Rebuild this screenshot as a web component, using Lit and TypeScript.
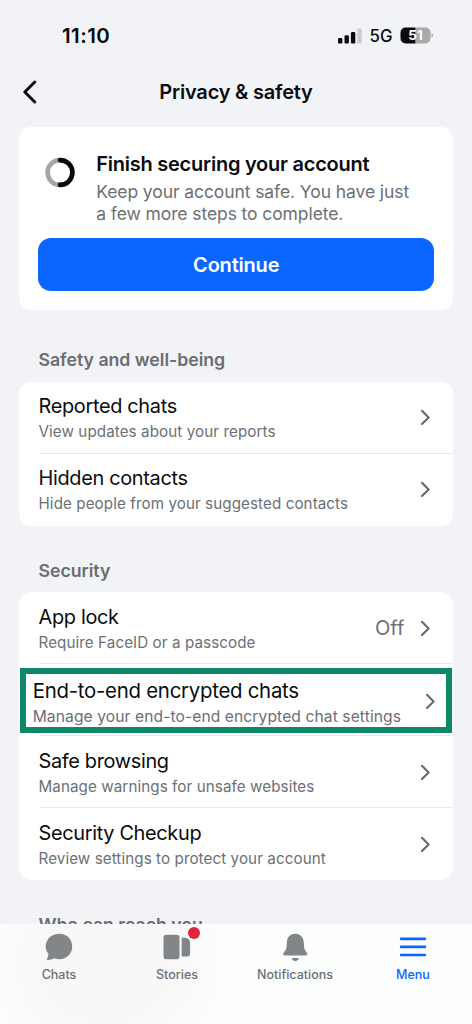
import { LitElement, html, css, svg, nothing } from "lit";
import { customElement, property } from "lit/decorators.js";

interface Row {
  title: string;
  detail: string;
  value?: string;
  marked?: boolean;
}

const safetyRows: Row[] = [
  { title: "Reported chats", detail: "View updates about your reports" },
  { title: "Hidden contacts", detail: "Hide people from your suggested contacts" },
];

const securityRows: Row[] = [
  { title: "App lock", detail: "Require FaceID or a passcode", value: "Off" },
  { title: "End-to-end encrypted chats", detail: "Manage your end-to-end encrypted chat settings", marked: true },
  { title: "Safe browsing", detail: "Manage warnings for unsafe websites" },
  { title: "Security Checkup", detail: "Review settings to protect your account" },
];

@customElement("settings-row")
class SettingsRow extends LitElement {
  @property({ attribute: false }) row!: Row;

  static styles = css`
    :host {
      display: block;
      position: relative;
      height: 72px;
      box-sizing: border-box;
      padding-left: 19.5px;
    }
    .line {
      display: flex;
      align-items: center;
      height: 100%;
      box-sizing: border-box;
      padding-right: 22.5px;
      border-bottom: 1px solid #e7e9eb;
    }
    :host([last]) .line {
      border-bottom-color: transparent;
    }
    .text {
      flex: 1;
      min-width: 0;
      white-space: nowrap;
      padding-top: 1.5px;
    }
    .title {
      font-size: 19.9px;
      line-height: 26px;
      letter-spacing: -0.32px;
      color: #0a0c0e;
    }
    .detail {
      font-size: 15.2px;
      line-height: 20px;
      margin-top: 3px;
      letter-spacing: 0.08px;
      color: #6c7074;
    }
    .value {
      font-size: 20px;
      letter-spacing: 0.1px;
      color: #6c7074;
      margin-right: 15px;
    }
    .chevron {
      flex: none;
      display: block;
      width: 11px;
      height: 18px;
    }
    .callout {
      position: absolute;
      left: 1px;
      top: 3.6px;
      width: 432px;
      height: 65.4px;
      box-sizing: border-box;
      border: 6.5px solid #10866a;
      background: #fff;
      display: flex;
      align-items: center;
      padding: 1px 10.5px 0 6.7px;
    }
    .callout .title {
      font-size: 20.4px;
      line-height: 28px;
      letter-spacing: -0.26px;
    }
    .callout .detail {
      font-size: 15.6px;
      line-height: 20px;
      margin-top: 2px;
      letter-spacing: 0.1px;
    }
  `;

  private content() {
    return html`
      <div class="text">
        <div class="title">${this.row.title}</div>
        <div class="detail">${this.row.detail}</div>
      </div>
      ${this.row.value ? html`<span class="value">${this.row.value}</span>` : nothing}
      <svg class="chevron" viewBox="0 0 11 18">
        <path d="M2 2.8L8.600 9.400L2 16" fill="none" stroke="#66696d" stroke-width="2.100" stroke-linecap="round" stroke-linejoin="round" />
      </svg>
    `;
  }

  render() {
    return this.row.marked
      ? html`<div class="line"></div><div class="callout">${this.content()}</div>`
      : html`<div class="line">${this.content()}</div>`;
  }
}

const icons: Record<string, unknown> = {
  Chats: svg`<path fill="#828689" d="M14.3 .8C21.8 .8 27.200 6.200 27.200 13.500S21.800 26.200 14.300 26.200c-1.8 0-3.5-.3-5-.9-2 .9-4.300 1.600-6.500 1.700-.9 0-1.200-.8-.7-1.400.9-1.200 1.300-2.900 1.300-4.600C1.700 18.900.7 16.400.7 13.500.7 6.200 6.600 .8 14.300 .8Z"/>`,
  Stories: svg`<rect x="0.500" y="1.800" width="16" height="24.400" rx="2.800" fill="#828689"/><path fill="#828689" d="M18.600 4.800h3.500a5 5 0 0 1 5 5v11a2.600 2.600 0 0 1-2.600 2.600h-5.900Z"/>`,
  Notifications: svg`<path fill="#828689" d="M14.300 .7c4.700 0 7.900 3.200 8.300 7.600l.6 6.200c.1 1.400.7 2.500 1.500 3.500l1.200 1.700c.9 1.300.3 2.800-1.500 2.800H4.200c-1.800 0-2.400-1.500-1.500-2.800l1.200-1.700c.8-1 1.400-2.100 1.500-3.500l.6-6.200C6.400 3.900 9.600 .7 14.300 .7ZM11.800 25h5c1 0 1.300.8.6 1.500C16.700 27.400 15.600 28 14.300 28s-2.400-.6-3.100-1.500c-.7-.7-.4-1.500.6-1.500Z"/>`,
  Menu: svg`<path d="M2.100 5.800H25.900M2.100 13.900H25.900M2.100 22H25.900" stroke="#0a66ff" stroke-width="2.700" stroke-linecap="round"/>`,
};

@customElement("app-root")
class AppRoot extends LitElement {
  static styles = css`
    :host {
      display: flex;
      flex-direction: column;
      height: 1024px;
      overflow: hidden;
      background: #f2f3f7;
      font-family: Inter, "Liberation Sans", sans-serif;
      color: #0a0c0e;
    }
    .page {
      flex: 1;
      min-height: 0;
      overflow: hidden;
      display: flex;
      flex-direction: column;
    }
    .status {
      flex: none;
      height: 71px;
      box-sizing: border-box;
      padding: 0 38.5px 0 62px;
      display: flex;
      align-items: center;
    }
    .time {
      flex: 1;
      font-size: 20.4px;
      font-weight: 600;
      letter-spacing: 0.5px;
    }
    .signal {
      width: 24px;
      height: 16px;
      margin-right: 7.5px;
    }
    .network {
      font-size: 16.8px;
      font-weight: 500;
      letter-spacing: 0;
      margin-right: 7px;
    }
    .battery {
      width: 34px;
      height: 17px;
    }
    .battery-text {
      font: 700 13.5px Inter, sans-serif;
    }
    .nav {
      flex: none;
      height: 56px;
      box-sizing: border-box;
      padding: 0 20px 15px;
      display: grid;
      grid-template-columns: 40px 1fr 40px;
      align-items: center;
    }
    .back {
      width: 20px;
      height: 26px;
    }
    .nav-title {
      margin: 0;
      text-align: center;
      font-size: 20px;
      line-height: 28px;
      font-weight: 600;
      letter-spacing: -0.2px;
    }
    .card {
      flex: none;
      margin: 0 19px;
      background: #fff;
      border-radius: 12px;
    }
    .notice {
      height: 183px;
      box-sizing: border-box;
      padding: 23px 19px 19px 19.4px;
      display: flex;
      flex-direction: column;
      justify-content: space-between;
    }
    .notice-top {
      display: flex;
    }
    .ring {
      flex: none;
      width: 32px;
      height: 32px;
      margin: 6px 19.3px 0 6.5px;
    }
    .notice-title {
      font-size: 20px;
      line-height: 28px;
      font-weight: 600;
      letter-spacing: -0.24px;
      white-space: nowrap;
    }
    .notice-text {
      font-size: 17.5px;
      line-height: 21.5px;
      letter-spacing: -0.09px;
      margin-top: 3px;
      color: #6c7074;
      white-space: nowrap;
    }
    .continue {
      height: 53px;
      border: 0;
      border-radius: 13px;
      background: #0a66ff;
      color: #fff;
      font: 600 20px/54px Inter, sans-serif;
      letter-spacing: -0.2px;
      padding: 0;
    }
    .section {
      flex: none;
      margin: 0;
      padding: 38px 0 9.5px 38.5px;
      font-size: 17.7px;
      line-height: 24px;
      font-weight: 600;
      letter-spacing: -0.02px;
      color: #6a6d71;
    }
    .section.next {
      padding-top: 33px;
    }
    .tabs {
      flex: none;
      height: 100px;
      box-sizing: border-box;
      padding-top: 9px;
      display: grid;
      grid-template-columns: repeat(4, 118px);
      background: radial-gradient(ellipse 120px 110px at 106px 40px, #f8f8f9 55%, #fcfdfd 100%);
    }
    .tab {
      display: flex;
      flex-direction: column;
      align-items: center;
      font-size: 12.5px;
      line-height: 18px;
      font-weight: 500;
      letter-spacing: 0;
      color: #6c7074;
    }
    .tab.active {
      color: #0a66ff;
    }
    .tab-icon {
      position: relative;
      width: 28px;
      height: 30px;
      margin-bottom: 2.5px;
    }
    .tab-icon svg {
      display: block;
      width: 28px;
      height: 30px;
    }
    .badge {
      position: absolute;
      left: 24.5px;
      top: -6.5px;
      width: 12.5px;
      height: 12.5px;
      border-radius: 50%;
      background: #e0243a;
    }
  `;

  private rows(rows: Row[]) {
    return html`<div class="card">
      ${rows.map((row, i) => html`<settings-row .row=${row} ?last=${i === rows.length - 1}></settings-row>`)}
    </div>`;
  }

  render() {
    return html`
      <div class="page">
        <div class="status">
          <span class="time">11:10</span>
          <svg class="signal" viewBox="0 0 24 16">
            <rect x="0" y="10" width="4.400" height="5.500" rx="1.300" fill="#0b0b0c" />
            <rect x="6.500" y="7.300" width="4.400" height="8.200" rx="1.300" fill="#0b0b0c" />
            <rect x="12.900" y="4" width="4.400" height="11.500" rx="1.300" fill="#0b0b0c" />
            <rect x="19.300" y="0.500" width="4.400" height="15" rx="1.300" fill="#cacbcd" />
          </svg>
          <span class="network">5G</span>
          <svg class="battery" viewBox="0 0 34 17">
            <path d="M5.500 0.500H15.600V16.500H5.500A5 5 0 0 1 .5 11.500V5.500A5 5 0 0 1 5.500 .5Z" fill="#0b0b0c" />
            <path d="M15.600 .5H25.500A5 5 0 0 1 30.500 5.500V11.500A5 5 0 0 1 25.500 16.500H15.600Z" fill="#a8a9ab" />
            <path d="M31.500 6.300C33.500 6.800 33.500 10.200 31.500 10.700Z" fill="#a8a9ab" />
            <text class="battery-text" x="15.500" y="13.400" text-anchor="middle" fill="#fff">51</text>
          </svg>
        </div>
        <div class="nav">
          <svg class="back" viewBox="0 0 20 26">
            <path d="M14.800 3L4.800 13L14.800 23" fill="none" stroke="#0a0c0e" stroke-width="3" stroke-linecap="round" stroke-linejoin="round" />
          </svg>
          <h1 class="nav-title">Privacy &amp; safety</h1>
        </div>
        <div class="card notice">
          <div class="notice-top">
            <svg class="ring" viewBox="0 0 32 32">
              <circle cx="15" cy="16.500" r="12.400" fill="none" stroke="#a3a5a7" stroke-width="4.600" />
              <path d="M15 4.100A12.400 12.400 0 0 1 15 28.900" fill="none" stroke="#0b0b0c" stroke-width="4.600" stroke-linecap="round" />
            </svg>
            <div>
              <div class="notice-title">Finish securing your account</div>
              <div class="notice-text">Keep your account safe. You have just<br />a few more steps to complete.</div>
            </div>
          </div>
          <button class="continue">Continue</button>
        </div>
        <h2 class="section">Safety and well-being</h2>
        ${this.rows(safetyRows)}
        <h2 class="section next">Security</h2>
        ${this.rows(securityRows)}
        <h2 class="section next">Who can reach you</h2>
      </div>
      <nav class="tabs">
        ${["Chats", "Stories", "Notifications", "Menu"].map(
          (name) => html`<div class="tab ${name === "Menu" ? "active" : ""}">
            <div class="tab-icon">
              <svg viewBox="0 0 28 30">${icons[name]}</svg>
              ${name === "Stories" ? html`<span class="badge"></span>` : nothing}
            </div>
            <span>${name}</span>
          </div>`
        )}
      </nav>
    `;
  }
}
